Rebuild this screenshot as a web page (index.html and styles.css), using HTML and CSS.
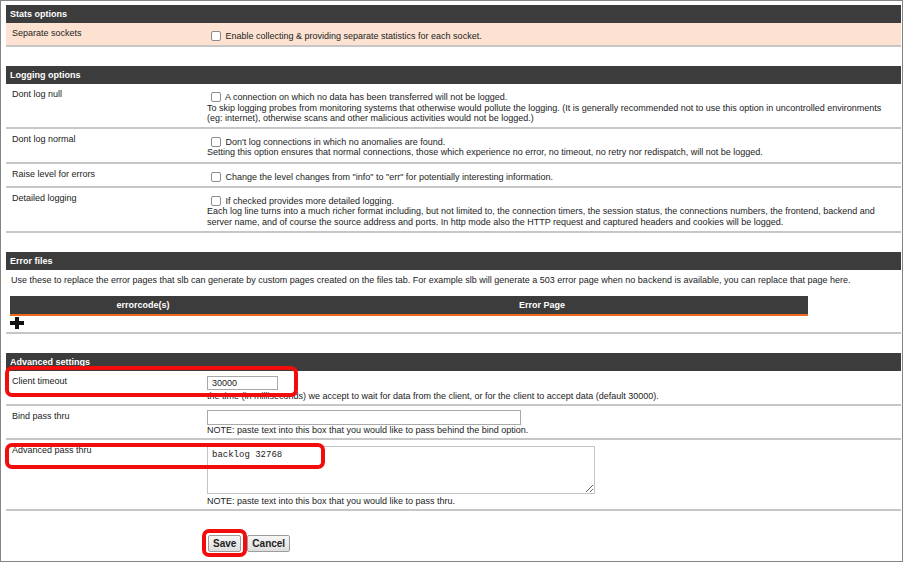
FILE: index.html
```html
<!DOCTYPE html>
<html lang="en">
<head>
  <meta charset="UTF-8" />
  <title>Advanced settings</title>
  <link rel="stylesheet" href="styles.css">
</head>
<body>
  <div class="frame">
    <table class="section">
      <colgroup><col class="label-col"><col></colgroup>
      <tr><th colspan="2">Stats options</th></tr>
      <tr class="row peach">
        <td class="label">Separate sockets</td>
        <td class="value"><input type="checkbox"> Enable collecting &amp; providing separate statistics for each socket.</td>
      </tr>
    </table>

    <table class="section">
      <colgroup><col class="label-col"><col></colgroup>
      <tr><th colspan="2">Logging options</th></tr>
      <tr class="row">
        <td class="label">Dont log null</td>
        <td class="value"><input type="checkbox"> A connection on which no data has been transferred will not be logged.<br>
          To skip logging probes from monitoring systems that otherwise would pollute the logging. (It is generally recommended not to use this option in uncontrolled environments (eg: internet), otherwise scans and other malicious activities would not be logged.)</td>
      </tr>
      <tr class="row">
        <td class="label">Dont log normal</td>
        <td class="value"><input type="checkbox"> Don't log connections in which no anomalies are found.<br>
          Setting this option ensures that normal connections, those which experience no error, no timeout, no retry nor redispatch, will not be logged.</td>
      </tr>
      <tr class="row">
        <td class="label">Raise level for errors</td>
        <td class="value"><input type="checkbox"> Change the level changes from "info" to "err" for potentially interesting information.</td>
      </tr>
      <tr class="row">
        <td class="label">Detailed logging</td>
        <td class="value"><input type="checkbox"> If checked provides more detailed logging.<br>
          Each log line turns into a much richer format including, but not limited to, the connection timers, the session status, the connections numbers, the frontend, backend and server name, and of course the source address and ports. In http mode also the HTTP request and captured headers and cookies will be logged.</td>
      </tr>
    </table>

    <table class="section">
      <tr><th>Error files</th></tr>
      <tr class="row">
        <td class="errors-cell">
          <p class="desc">Use these to replace the error pages that slb can generate by custom pages created on the files tab. For example slb will generate a 503 error page when no backend is available, you can replace that page here.</p>
          <table class="errors">
            <colgroup><col class="code-col"><col></colgroup>
            <tr><th>errorcode(s)</th><th>Error Page</th></tr>
            <tr>
              <td colspan="2" class="add">
                <svg width="14" height="12" viewBox="0 0 14 12"><path d="M5 0h4v4h5v4H9v4H5V8H0V4h5z" fill="#111"/></svg>
              </td>
            </tr>
          </table>
        </td>
      </tr>
    </table>

    <table class="section">
      <colgroup><col class="label-col"><col></colgroup>
      <tr><th colspan="2">Advanced settings</th></tr>
      <tr class="row">
        <td class="label">Client timeout</td>
        <td class="field">
          <input type="text" class="input short" value="30000">
          <div class="note">the time (in milliseconds) we accept to wait for data from the client, or for the client to accept data (default 30000).</div>
        </td>
      </tr>
      <tr class="row">
        <td class="label">Bind pass thru</td>
        <td class="field bind">
          <input type="text" class="input long">
          <div class="note">NOTE: paste text into this box that you would like to pass behind the bind option.</div>
        </td>
      </tr>
      <tr class="row">
        <td class="label">Advanced pass thru</td>
        <td class="field">
          <textarea class="area">backlog 32768</textarea>
          <div class="note">NOTE: paste text into this box that you would like to pass thru.</div>
        </td>
      </tr>
    </table>

    <div class="actions">
      <button class="btn">Save</button>
      <button class="btn">Cancel</button>
    </div>

    <!-- highlight marks drawn over the form -->
    <div class="mark mark-timeout"></div>
    <div class="mark mark-pass"></div>
    <div class="mark mark-save"></div>
  </div>
</body>
</html>
```

FILE: styles.css
```css
body {
  margin: 0;
  font-family: 'Liberation Sans', Arial, sans-serif;
  font-size: 9px;
  color: #222;
  background-color: white;
}
.frame {
  position: relative;
  width: 903px;
  height: 562px;
  box-sizing: border-box;
  border: 1px solid #858585;
  padding: 4px 1px 0 5px;
  overflow: hidden;
}
.section {
  width: 100%;
  border-collapse: separate;
  border-spacing: 0;
  table-layout: fixed;
  margin-bottom: 19px;
}
.label-col {
  width: 198px;
}
.section th {
  height: 18px;
  padding: 0 4px;
  background-color: #3c3c3c;
  color: white;
  font-weight: bold;
  text-align: left;
  line-height: 18px;
}
.row > td {
  border-bottom: 2px solid #c6c6c6;
  vertical-align: top;
}
.peach td {
  background-color: #fde2d2;
}
.label {
  padding: 5px 6px 0;
  line-height: 11px;
}
.value {
  padding: 8px 4px 4px 3px;
  line-height: 10.3px;
}
.value input[type=checkbox] {
  appearance: none;
  width: 10px;
  height: 10px;
  margin: 0 2px 0 4px;
  border: 1px solid #8c8c8c;
  border-radius: 2px;
  background: white;
  vertical-align: -2px;
}
.errors-cell {
  padding: 0 4px 3px;
}
.desc {
  margin: 0;
  padding: 5px 1px 0;
  line-height: 11px;
}
.errors {
  width: 798px;
  margin-top: 10px;
  border-collapse: separate;
  border-spacing: 0;
  table-layout: fixed;
}
.code-col {
  width: 266px;
}
.errors th {
  height: 18px;
  padding: 0;
  background-color: #3c3c3c;
  color: white;
  font-weight: bold;
  text-align: center;
  border-bottom: 2px solid #ee6a1f;
}
.add {
  padding: 1px 0 0;
  height: 12px;
  line-height: 0;
}
.add svg {
  display: block;
}
.field {
  padding: 5px 4px 2px 3px;
}
.field.bind {
  padding-top: 4px;
}
.input {
  display: block;
  box-sizing: border-box;
  height: 14px;
  margin: 0 0 1px;
  padding: 0 4px;
  border: 1px solid #a9a9a9;
  font-family: 'Liberation Sans', Arial, sans-serif;
  font-size: 9px;
  color: #222;
}
.short {
  width: 71px;
}
.long {
  width: 314px;
  height: 15px;
  margin-bottom: 0;
}
.area {
  display: block;
  box-sizing: border-box;
  width: 388px;
  height: 48px;
  margin: 1px 0 2px;
  padding: 3px 4px;
  border: 1px solid #c4c4c4;
  font-family: 'Liberation Mono', monospace;
  font-size: 9px;
  color: #222;
}
.note {
  line-height: 11px;
}
.actions {
  display: flex;
  gap: 6px;
  padding: 5px 0 0 202px;
}
.btn {
  height: 17px;
  padding: 0 4px;
  border: 1px solid #9c9c9c;
  border-radius: 2px;
  background: linear-gradient(#f6f6f6, #dedede);
  font-family: 'Liberation Sans', Arial, sans-serif;
  font-size: 10px;
  font-weight: bold;
  color: #222;
}
.mark {
  position: absolute;
  box-sizing: border-box;
  border: 4px solid #f20d0d;
  border-radius: 7px;
}
.mark-timeout {
  left: 4px;
  top: 365px;
  width: 293px;
  height: 31px;
}
.mark-pass {
  left: 4px;
  top: 442px;
  width: 320px;
  height: 26px;
}
.mark-save {
  left: 201px;
  top: 528px;
  width: 45px;
  height: 28px;
}
```
